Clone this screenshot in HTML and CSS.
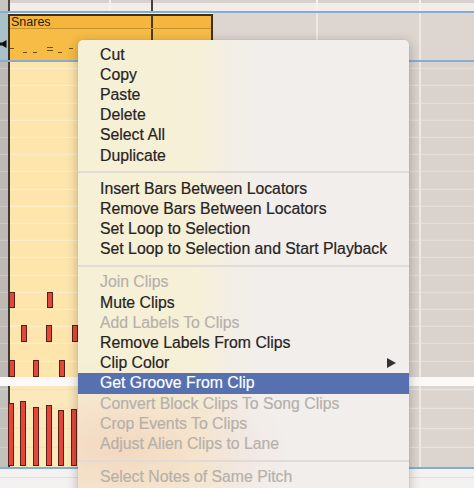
FILE: index.html
```html
<!DOCTYPE html>
<html>
<head>
<meta charset="utf-8">
<link rel="stylesheet" href="styles.css">
</head>
<body>
<div class="daw">
  <div class="band ruler">
    <div class="head ruler-head"></div>
    <div class="ruler-body"></div>
  </div>
  <div class="blue-line"></div>
  <div class="band track">
    <div class="head track-head">
      <svg class="spk" width="7" height="8" viewBox="0 0 7 8"><path d="M0 2.5H2.2L6.5 0V8L2.2 5.5H0Z" fill="#111"/></svg>
    </div>
    <div class="clip">
      <div class="clip-title">Snares</div>
      <div class="clip-body">
        <span class="dash" style="left:0px;top:19px"></span>
        <span class="dash" style="left:13px;top:23px"></span>
        <span class="dash" style="left:23px;top:23px"></span>
        <span class="dash wide" style="left:37px;top:18px"></span>
        <span class="dash wide" style="left:37px;top:21px"></span>
        <span class="dash" style="left:48px;top:23px"></span>
        <span class="dash" style="left:59px;top:19px"></span>
      </div>
    </div>
    <div class="rest track-rest"></div>
  </div>
  <div class="blue-line"></div>
  <div class="band lane">
    <div class="head lane-head"></div>
    <div class="lane-clip">
      <span class="note" style="left:-1px;top:230px;height:16px"></span>
      <span class="note" style="left:37px;top:230px;height:16px"></span>
      <span class="note" style="left:11px;top:263px;height:17px"></span>
      <span class="note" style="left:36px;top:263px;height:17px"></span>
      <span class="note" style="left:62px;top:263px;height:17px"></span>
      <span class="note" style="left:-1px;top:298px;height:17px"></span>
      <span class="note" style="left:23px;top:298px;height:17px"></span>
      <span class="note" style="left:49px;top:298px;height:17px"></span>
      <span class="note" style="left:75px;top:298px;height:17px"></span>
    </div>
    <div class="rest lane-rest"></div>
  </div>
  <div class="white-band"></div>
  <div class="band vel">
    <div class="head vel-head"></div>
    <div class="vel-clip">
      <span class="bar" style="left:-2px;top:17px"></span>
      <span class="bar" style="left:10px;top:15px"></span>
      <span class="bar" style="left:23px;top:21px"></span>
      <span class="bar" style="left:36px;top:19px"></span>
      <span class="bar" style="left:48px;top:24px"></span>
      <span class="bar" style="left:61px;top:23px"></span>
      <span class="bar" style="left:86px;top:20px"></span>
    </div>
    <div class="rest vel-rest"></div>
  </div>
  <div class="blue-line"></div>
  <div class="footer"></div>

  <div class="menu">
    <div class="item">Cut</div>
    <div class="item">Copy</div>
    <div class="item">Paste</div>
    <div class="item">Delete</div>
    <div class="item">Select All</div>
    <div class="item">Duplicate</div>
    <div class="sep"></div>
    <div class="item">Insert Bars Between Locators</div>
    <div class="item">Remove Bars Between Locators</div>
    <div class="item">Set Loop to Selection</div>
    <div class="item">Set Loop to Selection and Start Playback</div>
    <div class="sep"></div>
    <div class="item dis">Join Clips</div>
    <div class="item">Mute Clips</div>
    <div class="item dis">Add Labels To Clips</div>
    <div class="item">Remove Labels From Clips</div>
    <div class="item">Clip Color<span class="arrow"></span></div>
    <div class="item sel">Get Groove From Clip</div>
    <div class="item dis">Convert Block Clips To Song Clips</div>
    <div class="item dis">Crop Events To Clips</div>
    <div class="item dis">Adjust Alien Clips to Lane</div>
    <div class="sep"></div>
    <div class="item dis">Select Notes of Same Pitch</div>
  </div>
</div>
</body>
</html>
```

FILE: styles.css
```css
* { box-sizing: border-box; }
html, body { margin: 0; padding: 0; }
body {
  width: 474px;
  height: 488px;
  overflow: hidden;
  background: #f4f2f0;
  font-family: "Liberation Sans", Arial, sans-serif;
}
.daw {
  position: relative;
  width: 474px;
  height: 488px;
  overflow: hidden;
  background: #f4f2f0;
}
.band { display: flex; }
.head { width: 8px; flex: none; }

/* ruler */
.ruler { height: 11px; }
.ruler-head { background: #c9c5c2; }
.ruler-body {
  flex: 1;
  border-left: 2px solid #4a4642;
  background-origin: border-box;
  background-image:
    linear-gradient(to right, transparent 143px, #4a4036 143px, #4a4036 145px, transparent 145px),
    linear-gradient(to right, transparent 101px, #f6f2ee 101px, #f6f2ee 103px, transparent 103px),
    linear-gradient(to right, transparent 308px, #f6f2ee 308px, #f6f2ee 310px, transparent 310px),
    linear-gradient(to right, transparent 411px, #f6f2ee 411px, #f6f2ee 413px, transparent 413px),
    linear-gradient(to bottom, #d8d2ce 0, #d8d2ce 3px, #f2ede8 3px, #f2ede8 100%);
}
.blue-line { height: 2px; background: #84acd7; }

/* track with clip */
.track { height: 47px; }
.track-head {
  background: #a9c1c8;
  display: flex;
  align-items: flex-start;
  padding-top: 27px;
}
.spk { display: block; }
.clip {
  width: 205px;
  flex: none;
  margin-top: 1px;
  border: 2px solid #3b3122;
  border-bottom: 0;
  display: flex;
  flex-direction: column;
}
.clip-title {
  height: 13px;
  background: #f4b63b linear-gradient(to right, transparent 141px, #4a3a22 141px, #4a3a22 143px, transparent 143px);
  border-bottom: 1px solid #c4922f;
  font-size: 12.5px;
  line-height: 12px;
  color: #2a2010;
  padding-left: 1px;
}
.clip-body {
  flex: 1;
  position: relative;
  background: #f6bc46 linear-gradient(to right, transparent 141px, #4a3a22 141px, #4a3a22 143px, transparent 143px);
}
.dash {
  position: absolute;
  width: 4px;
  height: 1px;
  background: #6a4e1e;
}
.dash.wide { width: 6px; }
.rest {
  flex: 1;
  background-image:
    linear-gradient(to right, transparent 103px, #eee9e5 103px, #eee9e5 105px, transparent 105px),
    linear-gradient(to right, transparent 206px, #eee9e5 206px, #eee9e5 208px, transparent 208px);
}
.track-rest { background-color: #dcd5d0; }

/* note lane */
.lane { height: 315px; }
.lane-head {
  background: #beb9b5 repeating-linear-gradient(to bottom, transparent 0, transparent 16.2px, #cfcac6 16.2px, #cfcac6 17.2px);
  background-position: 0 -10.2px;
}
.lane-clip {
  width: 205px;
  flex: none;
  position: relative;
  border-left: 2px solid #3c3a37;
  background: #fde5ab repeating-linear-gradient(to bottom, transparent 0, transparent 16.2px, #fdf0d0 16.2px, #fdf0d0 17.2px);
  background-position: 0 -10.2px;
}
.lane-rest {
  background-color: #d9d2cd;
  background-image:
    linear-gradient(to right, transparent 103px, #eee9e5 103px, #eee9e5 105px, transparent 105px),
    linear-gradient(to right, transparent 206px, #eee9e5 206px, #eee9e5 208px, transparent 208px),
    repeating-linear-gradient(to bottom, transparent 0, transparent 16.2px, #e8e2de 16.2px, #e8e2de 17.2px);
  background-position: 0 0, 0 0, 0 -10.2px;
}
.note {
  position: absolute;
  width: 6px;
  background: #e2483a;
  border: 1px solid #5a1e14;
}
.white-band { height: 9px; background: #fbfaf9; }

/* velocity lane */
.vel { height: 81px; }
.vel-head {
  background: #c4c0bc repeating-linear-gradient(to bottom, transparent 0, transparent 18.2px, #d4d0cc 18.2px, #d4d0cc 19.2px);
  background-position: 0 -15.2px;
}
.vel-clip {
  width: 205px;
  flex: none;
  position: relative;
  border-left: 2px solid #3c3a37;
  background: #fbe8bb repeating-linear-gradient(to bottom, transparent 0, transparent 18.2px, #f3dfb3 18.2px, #f3dfb3 19.2px);
  background-position: 0 -15.2px;
}
.vel-rest {
  background-color: #dbd4cf;
  background-image:
    linear-gradient(to right, transparent 103px, #eee9e5 103px, #eee9e5 105px, transparent 105px),
    linear-gradient(to right, transparent 206px, #eee9e5 206px, #eee9e5 208px, transparent 208px),
    repeating-linear-gradient(to bottom, transparent 0, transparent 18.2px, #ebe6e2 18.2px, #ebe6e2 19.2px);
  background-position: 0 0, 0 0, 0 -15.2px;
}
.bar {
  position: absolute;
  width: 6px;
  bottom: 1px;
  background: #e2483a;
  border: 1px solid #5a1e14;
}
.footer {
  height: 19px;
  background: #f4f2f0 linear-gradient(to bottom, transparent 8px, #e4e0dd 8px, #e4e0dd 9px, transparent 9px);
}

/* context menu */
.menu {
  position: absolute;
  left: 78px;
  top: 40px;
  width: 331px;
  padding: 4.6px 0 24px;
  border-radius: 5px;
  background:
    radial-gradient(ellipse 170px 90px at 40px 410px, rgba(238, 170, 150, 0.35), rgba(238, 170, 150, 0)),
    linear-gradient(to right, #f6f0d7 0, #f6f0d8 120px, #f3eee6 155px, #f2eeeb 180px, #f2eeeb 100%);
  box-shadow: 0 3px 12px rgba(50, 35, 25, 0.32), 0 0 1px rgba(0, 0, 0, 0.2);
}
.item {
  height: 20.2px;
  line-height: 20.2px;
  padding: 0 13px 0 22px;
  font-size: 15.8px;
  color: #27231f;
  -webkit-text-stroke: 0.2px currentColor;
  white-space: nowrap;
  display: flex;
  align-items: center;
  justify-content: space-between;
}
.item.dis { color: #b6b0ab; }
.item.sel { background: #5670b0; color: #ffffff; }
.sep {
  height: 13px;
  display: flex;
  align-items: center;
}
.sep::before {
  content: "";
  flex: 1;
  height: 2px;
  background: #e1dbd6;
}
.arrow {
  width: 0;
  height: 0;
  border-left: 9px solid #333;
  border-top: 5px solid transparent;
  border-bottom: 5px solid transparent;
}
```
